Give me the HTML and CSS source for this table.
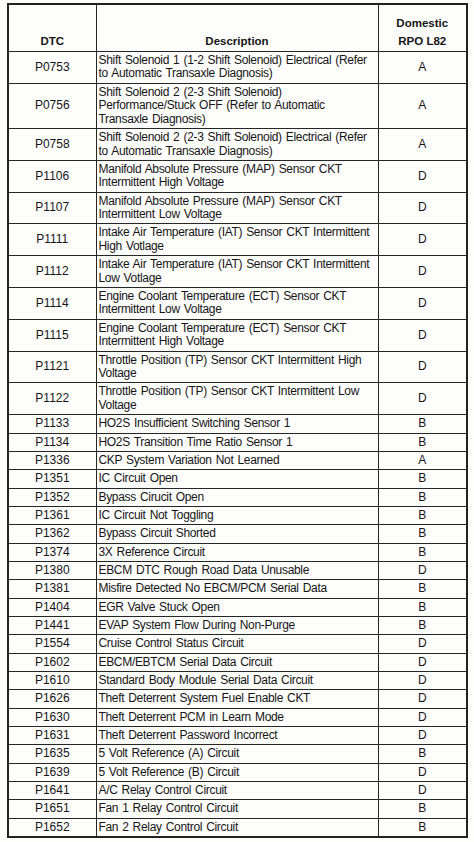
FILE: index.html
```html
<!DOCTYPE html>
<html>
<head>
<meta charset="utf-8">
<link rel="stylesheet" href="styles.css">
</head>
<body>
<table class="dtc-table">
  <colgroup>
    <col class="c-code">
    <col class="c-desc">
    <col class="c-rpo">
  </colgroup>
  <thead>
    <tr class="head">
      <th>DTC</th>
      <th>Description</th>
      <th>Domestic<br>RPO L82</th>
    </tr>
  </thead>
  <tbody>
    <tr><td class="code">P0753</td><td class="desc">Shift Solenoid 1 (1-2 Shift Solenoid) Electrical (Refer<br>to Automatic Transaxle Diagnosis)</td><td class="rpo">A</td></tr>
    <tr><td class="code">P0756</td><td class="desc">Shift Solenoid 2 (2-3 Shift Solenoid)<br>Performance/Stuck OFF (Refer to Automatic<br>Transaxle Diagnosis)</td><td class="rpo">A</td></tr>
    <tr><td class="code">P0758</td><td class="desc">Shift Solenoid 2 (2-3 Shift Solenoid) Electrical (Refer<br>to Automatic Transaxle Diagnosis)</td><td class="rpo">A</td></tr>
    <tr><td class="code">P1106</td><td class="desc">Manifold Absolute Pressure (MAP) Sensor CKT<br>Intermittent High Voltage</td><td class="rpo">D</td></tr>
    <tr><td class="code">P1107</td><td class="desc">Manifold Absolute Pressure (MAP) Sensor CKT<br>Intermittent Low Voltage</td><td class="rpo">D</td></tr>
    <tr><td class="code">P1111</td><td class="desc">Intake Air Temperature (IAT) Sensor CKT Intermittent<br>High Votlage</td><td class="rpo">D</td></tr>
    <tr><td class="code">P1112</td><td class="desc">Intake Air Temperature (IAT) Sensor CKT Intermittent<br>Low Votlage</td><td class="rpo">D</td></tr>
    <tr><td class="code">P1114</td><td class="desc">Engine Coolant Temperature (ECT) Sensor CKT<br>Intermittent Low Voltage</td><td class="rpo">D</td></tr>
    <tr><td class="code">P1115</td><td class="desc">Engine Coolant Temperature (ECT) Sensor CKT<br>Intermittent High Voltage</td><td class="rpo">D</td></tr>
    <tr><td class="code">P1121</td><td class="desc">Throttle Position (TP) Sensor CKT Intermittent High<br>Voltage</td><td class="rpo">D</td></tr>
    <tr><td class="code">P1122</td><td class="desc">Throttle Position (TP) Sensor CKT Intermittent Low<br>Voltage</td><td class="rpo">D</td></tr>
    <tr><td class="code">P1133</td><td class="desc">HO2S Insufficient Switching Sensor 1</td><td class="rpo">B</td></tr>
    <tr><td class="code">P1134</td><td class="desc">HO2S Transition Time Ratio Sensor 1</td><td class="rpo">B</td></tr>
    <tr><td class="code">P1336</td><td class="desc">CKP System Variation Not Learned</td><td class="rpo">A</td></tr>
    <tr><td class="code">P1351</td><td class="desc">IC Circuit Open</td><td class="rpo">B</td></tr>
    <tr><td class="code">P1352</td><td class="desc">Bypass Cirucit Open</td><td class="rpo">B</td></tr>
    <tr><td class="code">P1361</td><td class="desc">IC Circuit Not Toggling</td><td class="rpo">B</td></tr>
    <tr><td class="code">P1362</td><td class="desc">Bypass Circuit Shorted</td><td class="rpo">B</td></tr>
    <tr><td class="code">P1374</td><td class="desc">3X Reference Circuit</td><td class="rpo">B</td></tr>
    <tr><td class="code">P1380</td><td class="desc">EBCM DTC Rough Road Data Unusable</td><td class="rpo">D</td></tr>
    <tr><td class="code">P1381</td><td class="desc">Misfire Detected No EBCM/PCM Serial Data</td><td class="rpo">B</td></tr>
    <tr><td class="code">P1404</td><td class="desc">EGR Valve Stuck Open</td><td class="rpo">B</td></tr>
    <tr><td class="code">P1441</td><td class="desc">EVAP System Flow During Non-Purge</td><td class="rpo">B</td></tr>
    <tr><td class="code">P1554</td><td class="desc">Cruise Control Status Circuit</td><td class="rpo">D</td></tr>
    <tr><td class="code">P1602</td><td class="desc">EBCM/EBTCM Serial Data Circuit</td><td class="rpo">D</td></tr>
    <tr><td class="code">P1610</td><td class="desc">Standard Body Module Serial Data Circuit</td><td class="rpo">D</td></tr>
    <tr><td class="code">P1626</td><td class="desc">Theft Deterrent System Fuel Enable CKT</td><td class="rpo">D</td></tr>
    <tr><td class="code">P1630</td><td class="desc">Theft Deterrent PCM in Learn Mode</td><td class="rpo">D</td></tr>
    <tr><td class="code">P1631</td><td class="desc">Theft Deterrent Password Incorrect</td><td class="rpo">D</td></tr>
    <tr><td class="code">P1635</td><td class="desc">5 Volt Reference (A) Circuit</td><td class="rpo">B</td></tr>
    <tr><td class="code">P1639</td><td class="desc">5 Volt Reference (B) Circuit</td><td class="rpo">D</td></tr>
    <tr><td class="code">P1641</td><td class="desc">A/C Relay Control Circuit</td><td class="rpo">D</td></tr>
    <tr><td class="code">P1651</td><td class="desc">Fan 1 Relay Control Circuit</td><td class="rpo">B</td></tr>
    <tr><td class="code">P1652</td><td class="desc">Fan 2 Relay Control Circuit</td><td class="rpo">B</td></tr>
  </tbody>
</table>
</body>
</html>
```

FILE: styles.css
```css
html, body {
  margin: 0;
  padding: 0;
  background: #fdfdfc;
}
body {
  padding: 3px 8px 0 7px;
  font-family: "Liberation Sans", Arial, sans-serif;
  color: #151515;
}
.dtc-table {
  border-collapse: collapse;
  width: 459px;
  table-layout: fixed;
  border: 2px solid #222;
  font-size: 12px;
  line-height: 13.45px;
}
.c-code { width: 88px; }
.c-desc { width: 282px; }
.c-rpo { width: 89px; }
.dtc-table th,
.dtc-table td {
  border: 1px solid #262626;
  padding: 2px 2px 1.9px 2px;
}
.head th {
  height: 43px;
  vertical-align: bottom;
  text-align: center;
  font-weight: bold;
  font-size: 11.5px;
  padding-bottom: 1px;
  line-height: 18px;
}
.code {
  text-align: center;
  vertical-align: middle;
}
.desc {
  text-align: left;
  white-space: nowrap;
  letter-spacing: -0.32px;
  word-spacing: 1px;
  vertical-align: middle;
}
.rpo {
  text-align: center;
  vertical-align: middle;
}
```
